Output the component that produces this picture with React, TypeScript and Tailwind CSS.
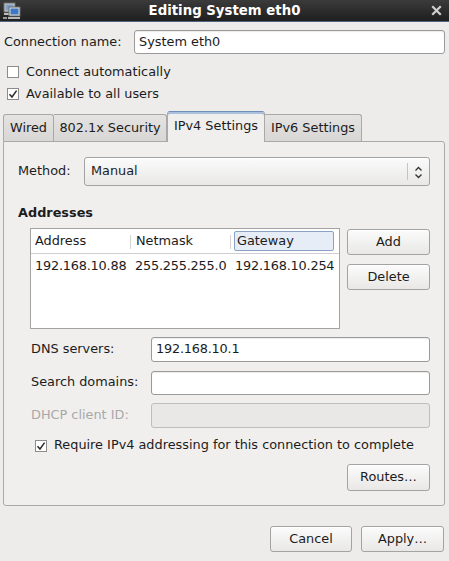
import React from "react";

const Check = ({ checked, className = "" }: { checked?: boolean; className?: string }) => (
  <div className={"w-[12px] h-[12px] border border-[#8c8c8c] bg-white flex items-center justify-center shrink-0 " + className}>
    {checked && (
      <svg width="10" height="10" viewBox="0 0 10 10">
        <path d="M1.5 5.2 L4 8 L8.6 1.6" fill="none" stroke="#2a2a2a" strokeWidth="1.5" />
      </svg>
    )}
  </div>
);

const Btn = ({ children, className = "" }: { children: React.ReactNode; className?: string }) => (
  <div
    className={
      "flex items-center justify-center rounded-[3px] border border-[#a3a3a3] bg-gradient-to-b from-[#fbfbfb] to-[#e9e8e7] shadow-[inset_0_1px_0_#ffffff] " +
      className
    }
  >
    {children}
  </div>
);

const Input = ({ value = "", disabled = false, className = "" }: { value?: string; disabled?: boolean; className?: string }) => (
  <div
    className={
      "flex items-center rounded-[3px] border px-[4px] " +
      (disabled ? "bg-[#e9e8e7] border-[#bdbdbd] " : "bg-white border-[#9a9a9a] shadow-[inset_0_1px_1px_rgba(0,0,0,0.08)] ") +
      className
    }
  >
    {value}
  </div>
);

export default function App() {
  return (
    <div
      className="w-[449px] h-[561px] bg-[#edeceb] text-[#1c1c1c] text-[12.85px] leading-none flex flex-col overflow-hidden"
      style={{ fontFamily: '"DejaVu Sans", sans-serif' }}
    >
      {/* Title bar */}
      <div className="h-[22px] shrink-0 bg-gradient-to-b from-[#3b3b3b] to-[#1f1f1f] border-b border-[#4f6680] flex items-center relative">
        <div className="absolute left-[3px] top-[2px]">
          <svg width="18" height="18" viewBox="0 0 18 18">
            <rect x="1" y="1" width="11" height="9" fill="#c9c9c9" stroke="#6a6a6a" strokeWidth="1" />
            <rect x="2.5" y="2.5" width="8" height="6" fill="#7da0c8" />
            <rect x="1" y="11" width="9" height="2" fill="#bdbdbd" />
            <rect x="6" y="5" width="11" height="9" fill="#dcdcdc" stroke="#6a6a6a" strokeWidth="1" />
            <rect x="7.5" y="6.5" width="8" height="6" fill="#3e78c4" />
            <rect x="5" y="15" width="12" height="2" fill="#b8b8b8" />
            <rect x="0" y="15" width="4" height="2" fill="#9a9a9a" />
          </svg>
        </div>
        <div className="flex-1 text-center text-white font-bold text-[13.3px]">Editing System eth0</div>
        <div className="absolute right-[7px] top-[5px]">
          <svg width="11" height="11" viewBox="0 0 11 11">
            <path d="M2 2 L9 9 M9 2 L2 9" stroke="#cfcfcf" strokeWidth="2.2" strokeLinecap="square" />
          </svg>
        </div>
      </div>

      {/* Connection name */}
      <div className="mt-[8px] flex items-center h-[24px] pl-[4px] pr-[4px]">
        <span className="w-[130px]">Connection name:</span>
        <Input value="System eth0" className="w-[311px] h-[24px]" />
      </div>

      {/* Checkboxes */}
      <div className="mt-[7px] flex items-center h-[22px] pl-[7px] gap-[7px]">
        <Check />
        <span>Connect automatically</span>
      </div>
      <div className="flex items-center h-[22px] pl-[7px] gap-[7px]">
        <Check checked />
        <span>Available to all users</span>
      </div>

      {/* Tabs */}
      <div className="mt-[6px] ml-[3px] flex items-end h-[30px] relative z-10">
        <div className="w-[51px] h-[27px] border border-b-0 border-[#a9a9a9] rounded-t-[3px] bg-gradient-to-b from-[#e4e3e1] to-[#d8d7d5] flex items-center justify-center">
          Wired
        </div>
        <div className="w-[113px] h-[27px] border border-b-0 border-l-0 border-[#a9a9a9] rounded-tr-[3px] bg-gradient-to-b from-[#e4e3e1] to-[#d8d7d5] flex items-center justify-center">
          802.1x Security
        </div>
        <div className="w-[98px] h-[31px] -mb-[1px] border border-b-0 border-[#a9a9a9] border-t-[#6f8fb6] rounded-t-[3px] bg-[#f0efee] flex items-start pt-[8px] justify-center shadow-[inset_0_2px_0_#a9c1dd]">
          IPv4 Settings
        </div>
        <div className="w-[97px] h-[27px] border border-b-0 border-l-0 border-[#a9a9a9] rounded-tr-[3px] bg-gradient-to-b from-[#e4e3e1] to-[#d8d7d5] flex items-center justify-center">
          IPv6 Settings
        </div>
      </div>

      {/* Panel */}
      <div className="ml-[3px] w-[442px] h-[365px] border border-[#a9a9a9] rounded-b-[3px] rounded-tr-[3px] bg-[#f0efee] px-[14px] pt-[15px] flex flex-col">
        {/* Method */}
        <div className="flex items-center h-[29px]">
          <span className="w-[66px]">Method:</span>
          <Btn className="flex-1 h-[29px] !justify-start pl-[6px] relative">
            <span>Manual</span>
            <div className="absolute right-[21px] top-[5px] bottom-[5px] w-px bg-[#c4c4c4]" />
            <div className="absolute right-[6px] top-[8px]">
              <svg width="9" height="13" viewBox="0 0 9 13">
                <path d="M1.5 4.5 L4.5 1.5 L7.5 4.5 M1.5 8.5 L4.5 11.5 L7.5 8.5" fill="none" stroke="#333" strokeWidth="1.3" />
              </svg>
            </div>
          </Btn>
        </div>

        {/* Addresses */}
        <div className="mt-[20px] font-bold h-[15px] flex items-center">Addresses</div>

        <div className="mt-[7px] ml-[12px] flex gap-[7px]">
          <div className="w-[310px] h-[101px] border border-[#a3a3a3] bg-white flex flex-col">
            <div className="h-[25px] border-b border-[#cfcfcf] flex items-center relative">
              <div className="w-[100px] pl-[4px] flex items-center h-full">Address</div>
              <div className="absolute left-[99px] top-[6px] h-[14px] w-px bg-[#d4d4d4]" />
              <div className="w-[100px] pl-[5px] flex items-center h-full">Netmask</div>
              <div className="absolute left-[199px] top-[6px] h-[14px] w-px bg-[#d4d4d4]" />
              <div className="ml-[3px] w-[100px] h-[20px] border border-[#8aa3c4] rounded-[2px] bg-[#e6edf6] flex items-center pl-[2px]">
                Gateway
              </div>
            </div>
            <div className="h-[24px] flex items-center tracking-[-0.2px]">
              <div className="w-[100px] pl-[4px] whitespace-nowrap">192.168.10.88</div>
              <div className="w-[100px] pl-[4px] whitespace-nowrap">255.255.255.0</div>
              <div className="w-[100px] pl-[4px] whitespace-nowrap">192.168.10.254</div>
            </div>
          </div>
          <div className="flex flex-col gap-[9px] pt-[1px]">
            <Btn className="w-[83px] h-[26px]">Add</Btn>
            <Btn className="w-[83px] h-[26px]">Delete</Btn>
          </div>
        </div>

        {/* DNS etc */}
        <div className="mt-[8px] ml-[13px] flex flex-col gap-[8px]">
          <div className="flex items-center h-[25px]">
            <span className="w-[120px]">DNS servers:</span>
            <Input value="192.168.10.1" className="w-[279px] h-[25px] tracking-[-0.2px]" />
          </div>
          <div className="flex items-center h-[25px]">
            <span className="w-[120px]">Search domains:</span>
            <Input className="w-[279px] h-[24px]" />
          </div>
          <div className="flex items-center h-[25px]">
            <span className="w-[120px] text-[#a8a8a8]">DHCP client ID:</span>
            <Input disabled className="w-[279px] h-[25px]" />
          </div>
        </div>

        <div className="mt-[9px] ml-[17px] flex items-center h-[17px] gap-[7px]">
          <Check checked />
          <span>Require IPv4 addressing for this connection to complete</span>
        </div>

        <div className="mt-[10px] flex justify-end">
          <Btn className="w-[83px] h-[27px]">Routes…</Btn>
        </div>
      </div>

      {/* Bottom buttons */}
      <div className="mt-[20px] flex justify-end gap-[9px] pr-[5px]">
        <Btn className="w-[82px] h-[26px]">Cancel</Btn>
        <Btn className="w-[83px] h-[26px]">Apply…</Btn>
      </div>
    </div>
  );
}
